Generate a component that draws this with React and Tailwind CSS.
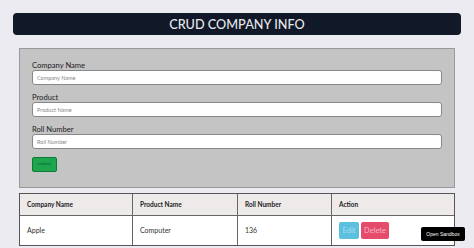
export default function App() {
  const font = { fontFamily: "Lato, 'Noto Sans', sans-serif" };
  return (
    <div className="relative w-[474px] h-[248px] overflow-hidden bg-[#ebebf1]" style={font}>
      <div className="pt-[13px] px-[13px]">
        <div className="h-[22px] rounded-[4px] bg-[#111827] flex items-center justify-center">
          <span className="text-[12.7px] leading-none text-[#e5e7eb] font-medium">CRUD COMPANY INFO</span>
        </div>
      </div>
      <div className="mx-[19px] mt-[13px] h-[140px] border border-[#999] bg-[#c4c4c4] px-[12px] pt-[12px]">
        {[
          ["Company Name", "Company Name"],
          ["Product", "Product Name"],
          ["Roll Number", "Roll Number"],
        ].map(([label, ph]) => (
          <div key={label} className="mb-[8px] flex flex-col">
            <label className="text-[7.6px] leading-[9px] text-[#222]">{label}</label>
            <input
              placeholder={ph}
              className="h-[15px] w-full rounded-[3px] border border-[#888] bg-white px-[4px] text-[5.5px] text-[#333] placeholder:text-[#888] outline-none"
            />
          </div>
        ))}
        <button className="block mt-[2px] h-[15px] w-[25px] rounded-[2px] border border-[#0d7a36] bg-[#1ea64e] text-[4.5px] text-[#063] leading-none">
          submit
        </button>
      </div>
      <div className="mx-[19px] mt-[5px] border border-[#555] bg-white">
        <div className="grid grid-cols-[113px_105px_94px_1fr] h-[22px] bg-[#eeeaea] border-b border-[#666]">
          {["Company Name", "Product Name", "Roll Number", "Action"].map((h, i) => (
            <div key={h} className={`flex items-center pl-[7px] text-[6.5px] font-bold text-[#222] ${i < 3 ? "border-r border-[#666]" : ""}`}>{h}</div>
          ))}
        </div>
        <div className="grid grid-cols-[113px_105px_94px_1fr] h-[29px]">
          <div className="flex items-center pl-[7px] text-[7px] text-[#333] border-r border-[#666]">Apple</div>
          <div className="flex items-center pl-[7px] text-[7px] text-[#333] border-r border-[#666]">Computer</div>
          <div className="flex items-center pl-[7px] text-[7px] text-[#333] border-r border-[#666]">136</div>
          <div className="flex items-center pl-[7px] gap-[2px]">
            <button className="h-[17px] w-[20px] rounded-[2px] bg-[#5bc0de] text-[7.5px] text-[#a8dcee] leading-none">Edit</button>
            <button className="h-[17px] w-[28px] rounded-[2px] bg-[#e54b6b] text-[7.5px] text-[#f5b3c0] leading-none">Delete</button>
          </div>
        </div>
      </div>
      <div className="absolute left-[421px] top-[227px] h-[14px] w-[44px] rounded-[2px] bg-black flex items-center justify-center">
        <span className="text-[5px] text-white leading-none" style={{ fontFamily: "'Liberation Sans', sans-serif" }}>Open Sandbox</span>
      </div>
    </div>
  );
}
